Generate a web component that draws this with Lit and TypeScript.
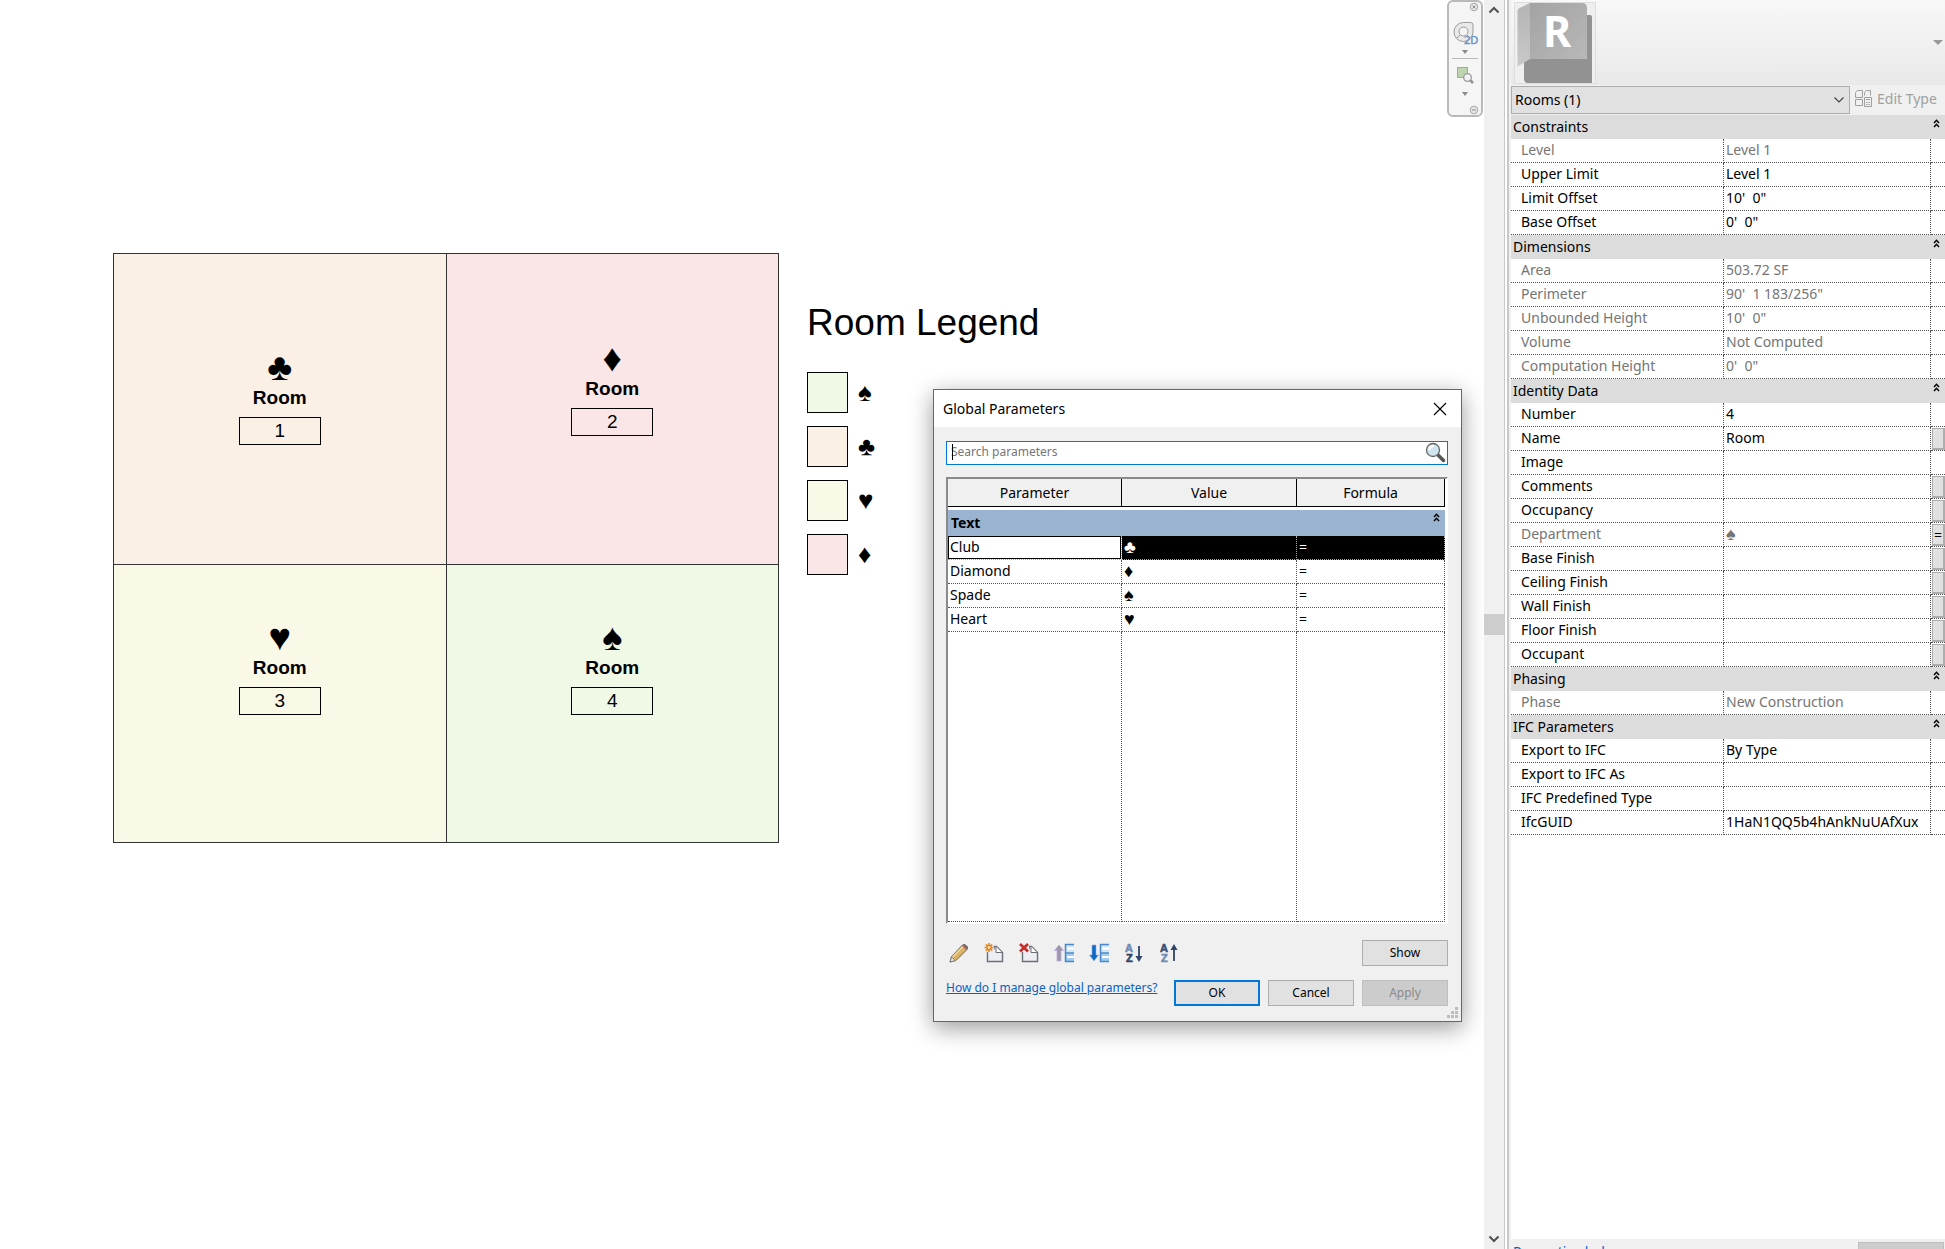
import { LitElement, html, css, svg, nothing } from "lit";
import { customElement } from "lit/decorators.js";
import { classMap } from "lit/directives/class-map.js";

type Row = { label: string; value?: string; muted?: boolean; button?: string; symbol?: boolean };
type Group = { title: string; rows: Row[] };

const GROUPS: Group[] = [
  {
    title: "Constraints",
    rows: [
      { label: "Level", value: "Level 1", muted: true },
      { label: "Upper Limit", value: "Level 1" },
      { label: "Limit Offset", value: `10'  0"` },
      { label: "Base Offset", value: `0'  0"` },
    ],
  },
  {
    title: "Dimensions",
    rows: [
      { label: "Area", value: "503.72 SF", muted: true },
      { label: "Perimeter", value: `90'  1 183/256"`, muted: true },
      { label: "Unbounded Height", value: `10'  0"`, muted: true },
      { label: "Volume", value: "Not Computed", muted: true },
      { label: "Computation Height", value: `0'  0"`, muted: true },
    ],
  },
  {
    title: "Identity Data",
    rows: [
      { label: "Number", value: "4" },
      { label: "Name", value: "Room", button: "" },
      { label: "Image" },
      { label: "Comments", button: "" },
      { label: "Occupancy", button: "" },
      { label: "Department", value: "♠", muted: true, button: "=", symbol: true },
      { label: "Base Finish", button: "" },
      { label: "Ceiling Finish", button: "" },
      { label: "Wall Finish", button: "" },
      { label: "Floor Finish", button: "" },
      { label: "Occupant", button: "" },
    ],
  },
  { title: "Phasing", rows: [{ label: "Phase", value: "New Construction", muted: true }] },
  {
    title: "IFC Parameters",
    rows: [
      { label: "Export to IFC", value: "By Type" },
      { label: "Export to IFC As" },
      { label: "IFC Predefined Type" },
      { label: "IfcGUID", value: "1HaN1QQ5b4hAnkNuUAfXux" },
    ],
  },
];

const ROOMS = [
  { suit: "club", symbol: "♣", number: 1 },
  { suit: "diamond", symbol: "♦", number: 2 },
  { suit: "heart", symbol: "♥", number: 3 },
  { suit: "spade", symbol: "♠", number: 4 },
];

const LEGEND = [
  { suit: "spade", symbol: "♠" },
  { suit: "club", symbol: "♣" },
  { suit: "heart", symbol: "♥" },
  { suit: "diamond", symbol: "♦" },
];

const PARAMETERS = [
  { name: "Club", symbol: "♣" },
  { name: "Diamond", symbol: "♦" },
  { name: "Spade", symbol: "♠" },
  { name: "Heart", symbol: "♥" },
];

const collapseIcon = html`<svg class="collapse-icon" width="7" height="9" viewBox="0 0 7 9" aria-hidden="true">
  <path d="M1 4 3.500 1.300 6 4M1 8 3.500 5.300 6 8" fill="none" stroke="#000" stroke-width="1.500" />
</svg>`;

const baseStyles = css`
  * {
    box-sizing: border-box;
  }
  button {
    appearance: none;
    margin: 0;
    padding: 0;
    border: 0;
    border-radius: 0;
    background: none;
    color: inherit;
    font: inherit;
  }
  svg {
    display: block;
  }
  table {
    width: 100%;
    border-collapse: separate;
    border-spacing: 0;
    table-layout: fixed;
  }
  th,
  td {
    padding: 0;
    font-weight: 400;
    text-align: left;
  }
`;

@customElement("floor-plan")
export class FloorPlan extends LitElement {
  static styles = [
    baseStyles,
    css`
      :host {
        display: grid;
        grid-template-columns: 1fr 1fr;
        grid-template-rows: 310px 277px;
        gap: 1px;
        border: 1px solid #333;
        background: #333;
        color: #000;
        font-family: "Liberation Sans", Arial, sans-serif;
      }
      .room {
        display: flex;
        flex-direction: column;
        align-items: center;
      }
      .club {
        background: #faf0e6;
        padding-top: 94px;
      }
      .diamond {
        background: #fae6e6;
        padding-top: 85px;
      }
      .heart {
        background: #faf8e6;
        padding-top: 53px;
      }
      .spade {
        background: #f0f9e6;
        padding-top: 53px;
      }
      .symbol {
        font-size: 38px;
        line-height: 38px;
      }
      .name {
        font-size: 19px;
        font-weight: 700;
        line-height: 24px;
      }
      .number {
        width: 82px;
        height: 28px;
        margin-top: 7px;
        border: 1px solid #000;
        font-size: 19px;
        line-height: 26px;
        text-align: center;
      }
    `,
  ];

  render() {
    return ROOMS.map(
      (r) => html`<div class="room ${r.suit}">
        <span class="symbol">${r.symbol}</span>
        <span class="name">Room</span>
        <span class="number">${r.number}</span>
      </div>`,
    );
  }
}

@customElement("room-legend")
export class RoomLegend extends LitElement {
  static styles = [
    baseStyles,
    css`
      :host {
        display: block;
        color: #000;
        font-family: "Liberation Sans", Arial, sans-serif;
      }
      h2 {
        margin: 0 0 27px;
        font-size: 37px;
        font-weight: 400;
        line-height: 44px;
        white-space: nowrap;
      }
      ul {
        display: flex;
        flex-direction: column;
        gap: 13px;
        margin: 0;
        padding: 0;
        list-style: none;
      }
      li {
        display: flex;
        align-items: center;
        gap: 10px;
        font-size: 26px;
        line-height: 41px;
      }
      .swatch {
        width: 41px;
        height: 41px;
        border: 1px solid #000;
      }
      .club {
        background: #faf0e6;
      }
      .diamond {
        background: #fae6e6;
      }
      .heart {
        background: #faf8e6;
      }
      .spade {
        background: #f0f9e6;
      }
    `,
  ];

  render() {
    return html`<h2>Room Legend</h2>
      <ul>
        ${LEGEND.map((l) => html`<li><span class="swatch ${l.suit}"></span><span>${l.symbol}</span></li>`)}
      </ul>`;
  }
}

@customElement("navigation-bar")
export class NavigationBar extends LitElement {
  static styles = [
    baseStyles,
    css`
      :host {
        display: flex;
        flex-direction: column;
        align-items: center;
        width: 36px;
        border: 2px solid #b9b9b9;
        border-radius: 6px;
        background: #f5f5f5;
      }
      .corner {
        align-self: flex-end;
        margin-right: 2px;
      }
      .wheel,
      .zoom,
      .customize {
        margin-top: 5px;
      }
      .caret {
        padding: 4px;
      }
      .zoom + .caret {
        margin-top: 2px;
      }
      .rule {
        width: 26px;
        height: 1px;
        background: #b9b9b9;
      }
      text {
        font: 400 11px "Noto Sans", "Open Sans", sans-serif;
      }
    `,
  ];

  private caret(label: string) {
    return html`<button class="caret" aria-label=${label}>
      <svg width="6" height="4" viewBox="0 0 6 4"><path d="M0 0H6L3 4Z" fill="#8a8a8a" /></svg>
    </button>`;
  }

  private corner(label: string, name: string, mark: unknown) {
    return html`<button class="corner ${name}" aria-label=${label}>
      <svg width="10" height="10" viewBox="0 0 10 10">
        <circle cx="5" cy="5" r="3.800" fill="#e6e6e6" stroke="#a6a6a6" />
        ${mark}
      </svg>
    </button>`;
  }

  render() {
    return html`${this.corner("Close", "close", svg`<path d="M3.500 3.500 6.500 6.500M6.500 3.500 3.500 6.500" stroke="#8f8f8f" />`)}
      <button class="wheel" aria-label="Steering wheel">
        <svg width="28" height="29" viewBox="0 0 28 29">
          <path d="M12.500 5.500H19.500Q22 5.500 22 8V15A9.500 9.500 0 1 1 12.500 5.500Z" fill="#e9e9ea" stroke="#9b9b9e" />
          <circle cx="12.500" cy="14.500" r="4.500" fill="#f4f4f4" stroke="#9b9b9e" />
          <path d="M9 18 6 21M16 18 18.500 20.500" stroke="#9b9b9e" />
          <text x="13" y="27" fill="#6f98c4" stroke="#6f98c4" stroke-width=".5">2D</text>
        </svg>
      </button>
      ${this.caret("Wheel options")}
      <div class="rule"></div>
      <button class="zoom" aria-label="Zoom in region">
        <svg width="22" height="22" viewBox="0 0 22 22">
          <rect x="3.500" y="3.500" width="10" height="10" fill="#bdd5ae" stroke="#8fb87e" />
          <path d="M16.500 16.500 19 19" stroke="#8f8f8f" stroke-width="2.500" />
          <circle cx="13.500" cy="13.500" r="3.800" fill="#f3f3f3" stroke="#999" stroke-width="1.300" />
        </svg>
      </button>
      ${this.caret("Zoom options")}
      ${this.corner("Customize", "customize", svg`<path d="M3 5H7" stroke="#8f8f8f" />`)}`;
  }
}

const pencilIcon = svg`
  <path d="M1 19 2.500 13.500 13.500 2 16 1.500 18.500 4 18 6.500 7 17.500Z" fill="#d9b266" stroke="#6e6557" />
  <path d="M3.500 14 14 3.500" stroke="#f3dca0" stroke-width="1.500" />
  <path d="M13 2.500 15.500 1 19 4.500 17.500 7Z" fill="#6a6a72" />
  <path d="M14 2.800 17 6" stroke="#c86a5e" stroke-width="1.500" />
  <path d="M1 19 2.500 14 6.500 17.500Z" fill="#e9e4d8" stroke="#77736b" stroke-width=".8" />`;

const pageShape = svg`
  <path d="M3.500 5.500V18.500H18.500V9.500L12.500 3.500H10V5.500Z" fill="#eceef3" stroke="#6b6f78" stroke-width="1.400" />
  <path d="M12 3.500V9.500H18" fill="#fff" stroke="#6b6f78" />`;

const newIcon = svg`${pageShape}
  <circle cx="5" cy="4.500" r="5" fill="#f0f0f0" />
  <path d="M5 0V9M.5 4.500H9.500M1.800 1.300 8.200 7.700M8.200 1.300 1.800 7.700" stroke="#ee8a1d" stroke-width="1.700" />
  <circle cx="5" cy="4.500" r="2" fill="#fff1b0" stroke="#e06a10" />`;

const deleteIcon = svg`${pageShape}
  <rect width="10" height="9" fill="#f0f0f0" />
  <path d="M1 1 9 8.500M9 1 1 8.500" stroke="#c7302b" stroke-width="2.800" />`;

const listShape = svg`
  <rect x="11" y="1.500" width="9" height="8" fill="#cfe6f7" />
  <rect x="11" y="10.500" width="9" height="8" fill="#9fcdf0" />
  <path d="M20 1.500H11.500V18.500H20M11.500 10H20" fill="none" stroke="#4a86c8" stroke-width="1.500" />
  <path d="M13 5.500H20M13 14H20" stroke="#fff" stroke-width="2" />`;

const moveUpIcon = svg`${listShape}
  <path d="M5 2 9.500 7.500H7V18H3V7.500H.5Z" fill="#9b98a6" stroke="#c3a8e6" stroke-width=".8" />`;

const moveDownIcon = svg`${listShape}
  <path d="M5 18 9.500 12H7V2H3V12H.5Z" fill="#0a6cc2" stroke="#9aa8f0" stroke-width=".6" />`;

const sortIcon = (up: boolean) => svg`
  <text x="1" y="9" fill=${up ? "#35507a" : "#6f8cb3"} stroke=${up ? "#35507a" : "#6f8cb3"}>A</text>
  <text x="2" y="19" fill=${up ? "#6f8cb3" : "#2f4568"} stroke=${up ? "#6f8cb3" : "#2f4568"}>Z</text>
  ${
    up
      ? svg`<path d="M15 18V5" stroke="#2f4568" stroke-width="1.800" /><path d="M15 1 18.500 7H11.500Z" fill="#2f4568" />`
      : svg`<path d="M15 3V15" stroke="#2f4568" stroke-width="1.800" /><path d="M15 19 18.500 13H11.500Z" fill="#2f4568" />`
  }`;

const TOOLS = [
  { label: "Edit", icon: pencilIcon },
  { label: "New", icon: newIcon },
  { label: "Delete", icon: deleteIcon },
  { label: "Move up", icon: moveUpIcon },
  { label: "Move down", icon: moveDownIcon },
  { label: "Sort ascending", icon: sortIcon(false) },
  { label: "Sort descending", icon: sortIcon(true) },
];

@customElement("global-parameters")
export class GlobalParameters extends LitElement {
  static styles = [
    baseStyles,
    css`
      :host {
        display: block;
        width: 529px;
        border: 1px solid #666;
        background: #f0f0f0;
        box-shadow: 0 6px 22px rgba(0, 0, 0, 0.4);
        color: #000;
        font: 12px/16px "Noto Sans", "Open Sans", sans-serif;
      }
      header {
        display: flex;
        align-items: center;
        justify-content: space-between;
        height: 37px;
        padding: 0 14px 0 9px;
        background: #fff;
      }
      h1 {
        margin: 0;
        font-size: 14px;
        font-weight: 400;
        line-height: 20px;
      }
      .body {
        display: flex;
        flex-direction: column;
        padding: 14px 13px 15px 12px;
      }
      .search {
        display: flex;
        align-items: center;
        position: relative;
        height: 24px;
        margin-bottom: 12px;
        border: 1px solid #0078d7;
        background: #fff;
      }
      .search input {
        flex: 1;
        min-width: 0;
        height: 22px;
        padding: 0 0 3px 4px;
        border: 0;
        outline: 0;
        background: transparent;
        font: inherit;
      }
      .search input::placeholder {
        color: #757575;
        opacity: 1;
      }
      .text-cursor {
        position: absolute;
        top: 2px;
        left: 5px;
        width: 1px;
        height: 16px;
        background: #000;
      }
      .frame {
        padding-right: 1px;
        border: 2px solid #fff;
        border-top-color: #8a8a8a;
        border-left-color: #8a8a8a;
        background: #fff;
      }
      table {
        font-size: 14px;
        line-height: 20px;
      }
      .col-name {
        width: 174px;
      }
      .col-value {
        width: 175px;
      }
      thead th {
        height: 28px;
        border-right: 1px solid #000;
        border-bottom: 1px solid #000;
        background: #f0f0f0;
        text-align: center;
      }
      .section th {
        height: 29px;
        padding: 0 5px 0 3px;
        border-top: 3px solid #fff;
        background: #99b3d1;
        font-weight: 700;
      }
      .section-row {
        display: flex;
        justify-content: space-between;
      }
      .section-row button {
        align-self: flex-start;
      }
      tbody td {
        height: 24px;
        padding: 0 0 2px 2px;
        border-right: 1px dotted #555;
        border-bottom: 1px dotted #555;
        line-height: 20px;
      }
      .symbol {
        font-family: "Liberation Sans", Arial, sans-serif;
        font-size: 18px;
      }
      .selected td {
        background: #000;
        color: #fff;
        border-color: #aaa;
      }
      .selected .name {
        background: #fff;
        color: #000;
        box-shadow: inset 0 0 0 1px #000;
      }
      .filler td {
        height: 290px;
      }
      .tools {
        display: flex;
        align-items: center;
        justify-content: space-between;
        margin: 16px 0 14px;
      }
      .icons {
        display: flex;
        gap: 15px;
        padding-left: 3px;
      }
      .icons text {
        font: 700 11px "Liberation Sans", Arial, sans-serif;
        stroke-width: 0.6px;
      }
      .actions {
        display: flex;
        align-items: flex-start;
        gap: 8px;
      }
      a {
        margin-right: auto;
        color: #0a62c4;
        text-decoration: underline;
        white-space: nowrap;
      }
      .push {
        width: 86px;
        height: 26px;
        border: 1px solid #adadad;
        background: #e1e1e1;
      }
      .primary {
        border: 2px solid #0078d7;
      }
      .push:disabled {
        border-color: #bfbfbf;
        background: #ccc;
        color: #8a8a8a;
      }
      .grip {
        position: absolute;
        right: 3px;
        bottom: 3px;
      }
    `,
  ];

  render() {
    return html`<header>
        <h1>Global Parameters</h1>
        <button aria-label="Close">
          <svg width="14" height="14" viewBox="0 0 14 14">
            <path d="M1 1 13 13M13 1 1 13" stroke="#000" stroke-width="1.200" />
          </svg>
        </button>
      </header>
      <div class="body">
        <div class="search">
          <input type="text" placeholder="Search parameters" aria-label="Search parameters" />
          <span class="text-cursor"></span>
          <button aria-label="Search">
            <svg width="22" height="22" viewBox="0 0 22 22">
              <path d="M12.500 12.500 18.500 18.500" stroke="#555" stroke-width="3.500" stroke-linecap="round" />
              <circle cx="8" cy="8" r="6.500" fill="#cfe4ee" stroke="#666" stroke-width="1.300" />
              <path d="M4.500 8A4 4 0 0 1 9 4" fill="none" stroke="#fff" stroke-width="2" />
            </svg>
          </button>
        </div>
        <div class="frame">
          <table>
            <colgroup>
              <col class="col-name" />
              <col class="col-value" />
              <col />
            </colgroup>
            <thead>
              <tr>
                <th scope="col">Parameter</th>
                <th scope="col">Value</th>
                <th scope="col">Formula</th>
              </tr>
            </thead>
            <tbody>
              <tr class="section">
                <th colspan="3" scope="rowgroup">
                  <div class="section-row"><span>Text</span><button aria-label="Collapse Text">${collapseIcon}</button></div>
                </th>
              </tr>
              ${PARAMETERS.map(
                (p, i) => html`<tr class=${classMap({ selected: i === 0 })}>
                  <td class="name">${p.name}</td>
                  <td class="symbol">${p.symbol}</td>
                  <td>=</td>
                </tr>`,
              )}
              <tr class="filler">
                <td></td>
                <td></td>
                <td></td>
              </tr>
            </tbody>
          </table>
        </div>
        <div class="tools">
          <div class="icons">
            ${TOOLS.map(
              (t) => html`<button aria-label=${t.label}>
                <svg width="20" height="20" viewBox="0 0 20 20">${t.icon}</svg>
              </button>`,
            )}
          </div>
          <button class="push">Show</button>
        </div>
        <div class="actions">
          <a href="#help">How do I manage global parameters?</a>
          <button class="push primary">OK</button>
          <button class="push">Cancel</button>
          <button class="push" disabled>Apply</button>
        </div>
      </div>
      <svg class="grip" width="11" height="11" viewBox="0 0 11 11" fill="#bdbdbd" aria-hidden="true">
        <path d="M8 0h3v3H8zM8 4h3v3H8zM8 8h3v3H8zM4 4h3v3H4zM4 8h3v3H4zM0 8h3v3H0z" />
      </svg>`;
  }
}

@customElement("properties-palette")
export class PropertiesPalette extends LitElement {
  static styles = [
    baseStyles,
    css`
      :host {
        display: flex;
        flex-direction: column;
        background: #fff;
        color: #000;
        font: 14px/20px "Noto Sans", "Open Sans", sans-serif;
      }
      .preview {
        display: flex;
        flex: none;
        align-items: center;
        justify-content: space-between;
        height: 85px;
        padding: 0 2px 0 3px;
        background: linear-gradient(#f8f8f8, #e9e9e9);
      }
      .preview text {
        font: 700 43px "Noto Sans", "Open Sans", sans-serif;
      }
      .filter {
        display: flex;
        flex: none;
        align-items: center;
        gap: 5px;
        height: 30px;
        background: #f0f0f0;
      }
      .picker {
        flex: 1;
        position: relative;
      }
      select {
        appearance: none;
        display: block;
        width: 100%;
        height: 28px;
        padding: 0 24px 0 3px;
        border: 1px solid #adadad;
        border-radius: 0;
        background: #e1e1e1;
        color: #000;
        font: inherit;
      }
      .picker svg {
        position: absolute;
        top: 11px;
        right: 6px;
        pointer-events: none;
      }
      .edit {
        display: flex;
        align-items: center;
        gap: 5px;
        width: 90px;
        padding-bottom: 3px;
        color: #a0a0a0;
        white-space: nowrap;
      }
      .col-label {
        width: 213px;
      }
      .col-button {
        width: 14px;
      }
      .group th {
        height: 24px;
        padding: 0 5px 0 2px;
        background: #dcdcdc;
      }
      .group-row {
        display: flex;
        justify-content: space-between;
      }
      .group-row button {
        align-self: flex-start;
        padding-top: 2px;
      }
      .item th,
      .item td {
        height: 24px;
        padding-bottom: 2px;
        border-bottom: 1px dotted #555;
      }
      .item th {
        padding-left: 10px;
        border-right: 1px dotted #555;
      }
      .item .value {
        padding-left: 2px;
        border-right: 1px dotted #555;
        white-space: pre;
      }
      .item .browse {
        padding: 0 0 0 1px;
      }
      .muted {
        color: #757575;
      }
      .symbol {
        font-family: "Liberation Sans", Arial, sans-serif;
        font-size: 18px;
      }
      .browse button {
        display: block;
        width: 13px;
        height: 22px;
        border: 1px solid #adadad;
        border-right-width: 2px;
        border-bottom-width: 2px;
        background: #e1e1e1;
        color: #000;
        line-height: 19px;
      }
      .space {
        flex: 1;
      }
      footer {
        display: flex;
        justify-content: space-between;
        flex: 0 0 10px;
        padding: 3px 1px 0 2px;
        background: #f0f0f0;
        overflow: hidden;
      }
      footer a {
        color: #0066cc;
        text-decoration: none;
      }
      footer button {
        width: 86px;
        height: 26px;
        border: 1px solid #bfbfbf;
        background: #ccc;
      }
    `,
  ];

  private renderRow(r: Row) {
    return html`<tr class="item">
      <th scope="row" class=${classMap({ muted: !!r.muted })}>${r.label}</th>
      <td class=${classMap({ value: true, muted: !!r.muted, symbol: !!r.symbol })}>${r.value ?? nothing}</td>
      <td class="browse">
        ${r.button === undefined ? nothing : html`<button aria-label="Browse ${r.label}">${r.button}</button>`}
      </td>
    </tr>`;
  }

  render() {
    return html`<div class="preview">
        <svg width="82" height="82" viewBox="0 0 82 82" role="img" aria-label="R">
          <defs>
            <linearGradient id="front" x1="0" y1="0" x2="1" y2="1">
              <stop offset="0" stop-color="#a3a3a3" />
              <stop offset="1" stop-color="#b8b8b8" />
            </linearGradient>
            <linearGradient id="fold" x1="0" y1="0" x2="0" y2="1">
              <stop offset="0" stop-color="#b4b4b4" />
              <stop offset="1" stop-color="#c9c9c9" />
            </linearGradient>
          </defs>
          <rect x=".5" y=".5" width="81" height="81" fill="#efefef" stroke="#dedede" />
          <path d="M10 56H72V13H76Q78 13 78 15V81H14Q10 81 10 77Z" fill="#929292" />
          <path d="M16 1H68Q73 1 73 6V57H16Z" fill="url(#front)" />
          <path d="M3.500 9Q3.500 7 5.500 6L16 1V57L3.500 64.500Z" fill="url(#fold)" />
          <text x="29" y="45" fill="#fff">R</text>
        </svg>
        <button aria-label="Choose type">
          <svg width="10" height="5" viewBox="0 0 10 5"><path d="M0 0H10L5 5Z" fill="#999" /></svg>
        </button>
      </div>
      <div class="filter">
        <div class="picker">
          <select aria-label="Element filter">
            <option>Rooms (1)</option>
          </select>
          <svg width="10" height="6" viewBox="0 0 10 6" aria-hidden="true">
            <path d="M.5 .5 5 5 9.500 .5" fill="none" stroke="#444" stroke-width="1.200" />
          </svg>
        </div>
        <button class="edit" disabled>
          <svg width="17" height="17" viewBox="0 0 17 17" fill="none" stroke="#a0a0a0">
            <path d="M.5 15.500V9.500H7.500V15.500ZM.5 7.500V2.500L2.500 .5H7.500V7.500ZM9.500 5.500V2.500L11.500 .5H15.500V5.500" />
            <path d="M9.500 7.500H16.500V16.500H9.500ZM11 9.500H15M11 12.500H12.500M13.500 12.500H15M11 14.500H12.500M13.500 14.500H15" />
          </svg>
          Edit Type
        </button>
      </div>
      <table>
        <colgroup>
          <col class="col-label" />
          <col />
          <col class="col-button" />
        </colgroup>
        ${GROUPS.map(
          (g) => html`<tbody>
            <tr class="group">
              <th colspan="3" scope="rowgroup">
                <div class="group-row">
                  <span>${g.title}</span><button aria-label="Collapse ${g.title}">${collapseIcon}</button>
                </div>
              </th>
            </tr>
            ${g.rows.map((r) => this.renderRow(r))}
          </tbody>`,
        )}
      </table>
      <div class="space"></div>
      <footer>
        <a href="#properties-help">Properties help</a>
        <button disabled aria-label="Apply"></button>
      </footer>`;
  }
}

@customElement("app-root")
export class AppRoot extends LitElement {
  static styles = [
    baseStyles,
    css`
      :host {
        display: flex;
        height: 100vh;
        overflow: hidden;
        background: #fff;
      }
      .view {
        flex: 1;
        position: relative;
        min-width: 0;
        overflow: hidden;
      }
      floor-plan {
        position: absolute;
        top: 253px;
        left: 113px;
        width: 666px;
      }
      room-legend {
        position: absolute;
        top: 301px;
        left: 807px;
      }
      global-parameters {
        position: absolute;
        top: 389px;
        left: 933px;
      }
      navigation-bar {
        position: absolute;
        top: 0;
        right: 1px;
      }
      .scrollbar {
        display: flex;
        flex-direction: column;
        align-items: center;
        justify-content: space-between;
        width: 20px;
        padding: 6px 0;
        background: #f0f0f0;
      }
      .thumb {
        width: 100%;
        height: 21px;
        background: #cdcdcd;
      }
      .divider {
        width: 5px;
        border: solid #c8c8c8;
        border-width: 0 2px 0 1px;
        background: #fff;
      }
      properties-palette {
        flex: 0 0 436px;
        border-left: 2px solid #f0f0f0;
      }
    `,
  ];

  render() {
    return html`<main class="view">
        <floor-plan></floor-plan>
        <room-legend></room-legend>
        <navigation-bar></navigation-bar>
        <global-parameters role="dialog" aria-label="Global Parameters"></global-parameters>
      </main>
      <div class="scrollbar">
        <button aria-label="Scroll up">
          <svg width="12" height="8" viewBox="0 0 12 8">
            <path d="M1.500 6.500 6 2 10.500 6.500" fill="none" stroke="#505050" stroke-width="2" />
          </svg>
        </button>
        <div class="thumb"></div>
        <button aria-label="Scroll down">
          <svg width="12" height="8" viewBox="0 0 12 8">
            <path d="M1.500 1.500 6 6 10.500 1.500" fill="none" stroke="#505050" stroke-width="2" />
          </svg>
        </button>
      </div>
      <div class="divider"></div>
      <properties-palette></properties-palette>`;
  }
}
